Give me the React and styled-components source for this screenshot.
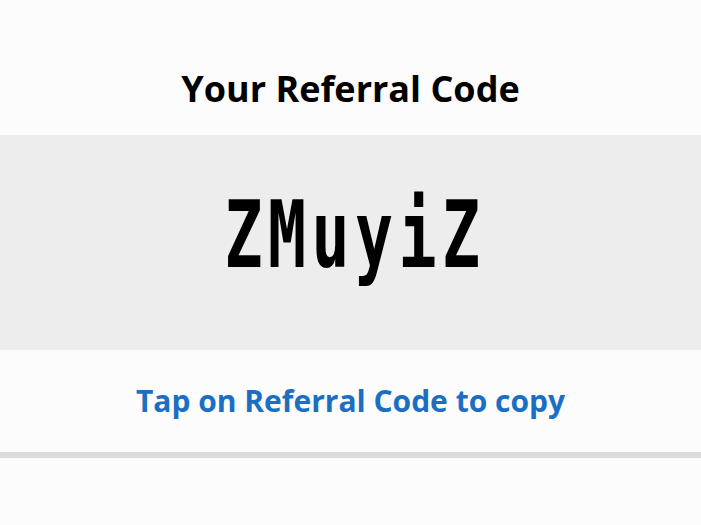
import React from "react";
import styled, { createGlobalStyle } from "styled-components";

const GlobalStyle = createGlobalStyle`
  html, body {
    margin: 0;
    padding: 0;
    background: #fcfcfc;
  }
`;

export default function App() {
  return (
    <>
      <GlobalStyle />
      <Screen>
        <Title>Your Referral Code</Title>
        <CodeBand>
          <CodeText>ZMuyiZ</CodeText>
        </CodeBand>
        <Hint>Tap on Referral Code to copy</Hint>
        <Divider />
      </Screen>
    </>
  );
}

const Screen = styled.div`
  width: 701px;
  height: 525px;
  display: flex;
  flex-direction: column;
  background: #fcfcfc;
  font-family: "Open Sans", sans-serif;
`;

const Title = styled.h1`
  margin: 0;
  height: 135px;
  display: flex;
  justify-content: center;
  align-items: center;
  box-sizing: border-box;
  padding-top: 42px;
  font-size: 36px;
  font-weight: 700;
  color: #000;
`;

const CodeBand = styled.div`
  height: 215px;
  background: #ededed;
  display: flex;
  align-items: center;
  justify-content: center;
`;

const CodeText = styled.span`
  font-family: "DejaVu Sans Mono", monospace;
  font-size: 93px;
  font-weight: 700;
  letter-spacing: 8px;
  margin-right: -8px;
  color: #000;
  display: inline-block;
  transform: translateY(-8px) scaleX(0.68);
`;

const Hint = styled.div`
  height: 102px;
  display: flex;
  align-items: center;
  justify-content: center;
  padding-bottom: 2px;
  box-sizing: border-box;
  font-size: 30px;
  font-weight: 700;
  color: #1a6fc4;
`;

const Divider = styled.div`
  height: 6px;
  background: #dcdcdc;
`;
